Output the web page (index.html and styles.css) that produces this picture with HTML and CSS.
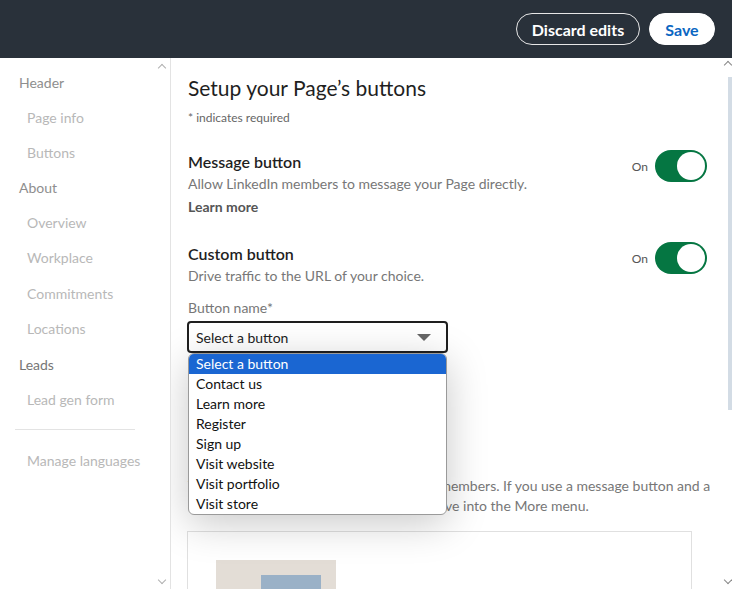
FILE: index.html
```html
<!DOCTYPE html>
<html>
<head>
<meta charset="utf-8">
<link rel="stylesheet" href="styles.css">
</head>
<body>
<header class="topbar">
  <button class="btn btn-outline">Discard edits</button>
  <button class="btn btn-save">Save</button>
</header>
<div class="layout">
  <nav class="sidebar">
    <span class="scroll-arrow up"></span>
    <div class="nav-group">Header</div>
    <div class="nav-item">Page info</div>
    <div class="nav-item">Buttons</div>
    <div class="nav-group">About</div>
    <div class="nav-item">Overview</div>
    <div class="nav-item">Workplace</div>
    <div class="nav-item">Commitments</div>
    <div class="nav-item">Locations</div>
    <div class="nav-group dark">Leads</div>
    <div class="nav-item">Lead gen form</div>
    <hr class="nav-divider">
    <div class="nav-item">Manage languages</div>
    <span class="scroll-arrow down"></span>
  </nav>
  <main class="main">
    <div class="content">
      <h1 class="title">Setup your Page’s buttons</h1>
      <p class="required">* indicates required</p>

      <section class="setting first">
        <div class="setting-text">
          <h2 class="setting-title">Message button</h2>
          <p class="setting-desc">Allow LinkedIn members to message your Page directly.</p>
          <a class="learn">Learn more</a>
        </div>
        <div class="toggle-wrap"><span class="on">On</span><span class="toggle"><span class="knob"></span></span></div>
      </section>

      <section class="setting second">
        <div class="setting-text">
          <h2 class="setting-title">Custom button</h2>
          <p class="setting-desc">Drive traffic to the URL of your choice.</p>
        </div>
        <div class="toggle-wrap"><span class="on">On</span><span class="toggle"><span class="knob"></span></span></div>
      </section>

      <label class="field-label">Button name*</label>
      <div class="select-wrap">
        <div class="select"><span>Select a button</span><span class="caret"></span></div>
        <ul class="listbox">
          <li class="opt selected">Select a button</li>
          <li class="opt">Contact us</li>
          <li class="opt">Learn more</li>
          <li class="opt">Register</li>
          <li class="opt">Sign up</li>
          <li class="opt">Visit website</li>
          <li class="opt">Visit portfolio</li>
          <li class="opt">Visit store</li>
        </ul>
      </div>

      <h2 class="preview-title">Preview</h2>
      <p class="preview-desc">The buttons will be visible to all LinkedIn members. If you use a message button and a custom buttons, a message button will move into the More menu.</p>

      <div class="card">
        <div class="cover"><div class="logo"></div></div>
      </div>
    </div>
    <div class="scrollbar">
      <span class="sb-arrow up"></span>
      <div class="thumb"></div>
      <span class="sb-arrow down"></span>
    </div>
  </main>
</div>
</body>
</html>
```
FILE: styles.css
```css
* { box-sizing: border-box; }
html, body { margin: 0; padding: 0; }
body {
  font-family: "Lato", "Noto Sans", sans-serif;
  background: #fff;
  width: 732px;
  height: 589px;
  overflow: hidden;
  color: #333;
}
.topbar {
  height: 58px;
  background: #29313a;
  display: flex;
  justify-content: flex-end;
  align-items: center;
  gap: 9px;
  padding-right: 17px;
}
.btn {
  height: 32px;
  border-radius: 16px;
  font-family: inherit;
  font-size: 16px;
  font-weight: 700;
  padding: 0;
  white-space: nowrap;
  cursor: pointer;
}
.btn-outline {
  background: transparent;
  border: 1px solid #e6e6e6;
  color: #fff;
  width: 124px;
}
.btn-save {
  background: #fff;
  border: 1px solid #fff;
  color: #0a66c2;
  width: 66px;
}
.layout {
  display: flex;
  height: 531px;
}
.sidebar {
  width: 171px;
  flex: none;
  border-right: 1px solid #e3e3e3;
  position: relative;
  padding-top: 7px;
  padding-left: 19px;
  font-size: 14px;
}
.nav-group, .nav-item {
  height: 35px;
  line-height: 35px;
  white-space: nowrap;
}
.nav-item:nth-of-type(n+6) { height: 35.5px; line-height: 35.5px; }
.nav-group { color: #8e8e8e; }
.nav-group.dark { color: #767676; }
.nav-item { color: #b8b8b8; padding-left: 8px; }
.nav-divider {
  border: 0;
  border-top: 1px solid #e3e3e3;
  margin: 12px 0 13px -4px;
  width: 120px;
}
.scroll-arrow {
  position: absolute;
  right: 5px;
  width: 6px;
  height: 6px;
  border-left: 1px solid #b0b0b0;
  border-top: 1px solid #b0b0b0;
}
.scroll-arrow.up { top: 7px; transform: rotate(45deg); }
.scroll-arrow.down { bottom: 6px; transform: rotate(225deg); }

.main {
  flex: 1;
  display: flex;
  position: relative;
  overflow: hidden;
}
.content {
  flex: 1;
  padding-left: 17px;
  padding-right: 11px;
}
.title {
  margin: 16px 0 0;
  font-size: 21px;
  font-weight: 400;
  line-height: 28px;
  color: #1f1f1f;
}
.required {
  margin: 8px 0 0;
  font-size: 12px;
  line-height: 16px;
  color: #666;
}
.setting {
  display: flex;
  justify-content: space-between;
  align-items: flex-start;
}
.setting.first { margin-top: 24px; }
.setting.second { margin-top: 25px; }
.setting-title {
  margin: 0;
  font-size: 16px;
  line-height: 24px;
  color: #1f1f1f;
  font-weight: 600;
}
.setting-desc {
  margin: 0;
  font-size: 14px;
  line-height: 20px;
  color: #777;
}
.learn {
  display: block;
  margin-top: 3px;
  font-size: 14px;
  line-height: 20px;
  color: #555;
  font-weight: 700;
}
.toggle-wrap {
  display: flex;
  align-items: center;
  gap: 7px;
  margin-top: 0;
}
.on { font-size: 12px; color: #555; }
.toggle {
  width: 52px;
  height: 32px;
  border-radius: 16px;
  background: #057642;
  display: flex;
  justify-content: flex-end;
  align-items: center;
  padding-right: 2px;
}
.knob {
  width: 28px;
  height: 28px;
  border-radius: 50%;
  background: #fff;
}
.field-label {
  display: block;
  margin-top: 12px;
  font-size: 14px;
  line-height: 20px;
  color: #777;
}
.select-wrap {
  position: relative;
  margin-top: 3px;
  width: 261px;
  margin-left: -1px;
}
.select {
  height: 32px;
  border: 2px solid #1f1f1f;
  border-radius: 4px;
  display: flex;
  align-items: center;
  justify-content: space-between;
  padding: 0 15px 0 7px;
  font-size: 14px;
  color: #222;
}
.caret {
  width: 0;
  height: 0;
  border-left: 7px solid transparent;
  border-right: 7px solid transparent;
  border-top: 7px solid #666;
}
.listbox {
  position: absolute;
  left: 1px;
  top: 32px;
  width: 259px;
  margin: 0;
  padding: 0;
  list-style: none;
  background: #fff;
  border: 1px solid #9a9a9a;
  border-radius: 6px;
  overflow: hidden;
  box-shadow: 0 8px 40px rgba(0,0,0,0.22);
  z-index: 5;
}
.opt {
  height: 20px;
  line-height: 20px;
  padding-left: 7px;
  font-size: 14px;
  color: #111;
}
.opt.selected { background: #1a66d2; color: #fff; }
.preview-title {
  margin: 99px 0 0;
  font-size: 16px;
  line-height: 24px;
  font-weight: 600;
}
.preview-desc {
  margin: 0 -12px 0 0;
  font-size: 14px;
  line-height: 20px;
  color: #777;
}
.card {
  margin-top: 15px;
  width: 505px;
  height: 80px;
  border: 1px solid #e0e0e0;
  border-bottom: 0;
  margin-left: -1px;
  padding: 28px 0 0 28px;
}
.cover {
  width: 120px;
  height: 40px;
  background: #e3ddd6;
  padding: 15px 0 0 45px;
}
.logo {
  width: 60px;
  height: 30px;
  background: #9ab1c7;
}
.scrollbar {
  width: 14px;
  flex: none;
  position: relative;
}
.thumb {
  position: absolute;
  right: 0;
  top: 19px;
  width: 4px;
  height: 333px;
  background: #d3dce5;
}
.sb-arrow {
  position: absolute;
  right: 1px;
  width: 6px;
  height: 6px;
  border-left: 1px solid #888;
  border-top: 1px solid #888;
}
.sb-arrow.up { top: 4px; transform: rotate(45deg); }
.sb-arrow.down { bottom: 6px; transform: rotate(225deg); }
```
